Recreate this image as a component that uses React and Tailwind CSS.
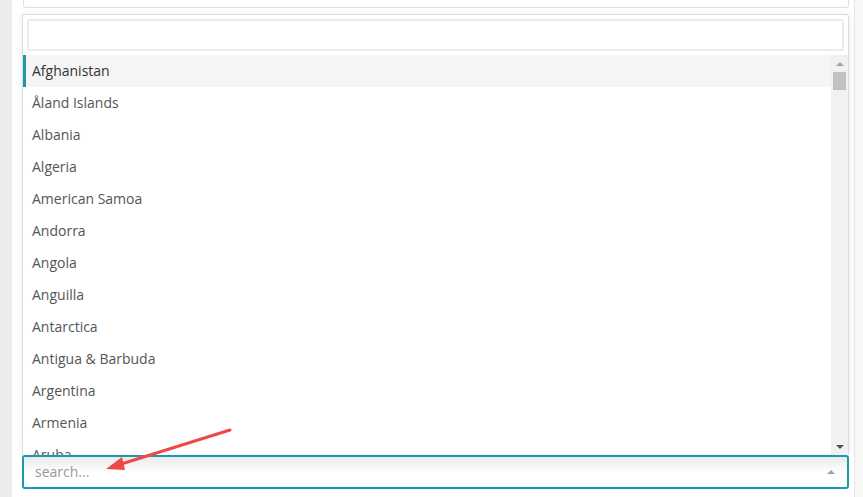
import React from 'react';

const countries = [
  'Afghanistan',
  'Åland Islands',
  'Albania',
  'Algeria',
  'American Samoa',
  'Andorra',
  'Angola',
  'Anguilla',
  'Antarctica',
  'Antigua & Barbuda',
  'Argentina',
  'Armenia',
  'Aruba',
];

const App = () => {
  return (
    <div className="relative flex h-[497px] w-[863px] overflow-hidden bg-white font-['Open_Sans',sans-serif] text-[14px]">
      {/* left page gutter */}
      <div className="w-[12px] shrink-0 bg-[#ececec]" />

      <div className="flex w-[843px] shrink-0 flex-col border-r border-[#e6e6e6] pl-[10px] pr-[5px]">
        {/* previous field, cut off at the top */}
        <div className="ml-px h-[8px] w-[826px] rounded-b-[3px] border border-t-0 border-[#e0e0e0]" />

        {/* dropdown */}
        <div className="mt-[6px] flex h-[441px] w-[827px] flex-col rounded-t-[3px] border border-b-0 border-[#dcdcdc] bg-white shadow-[0_0_8px_rgba(0,0,0,0.08)]">
          <div className="px-[4px] pt-[4px] pb-[4px]">
            <div className="h-[32px] rounded-[3px] border-2 border-[#ececec] bg-white" />
          </div>

          <div className="flex h-[400px] overflow-hidden">
            <ul className="flex-1 overflow-hidden">
              {countries.map((name, i) => (
                <li
                  key={name}
                  className={
                    i === 0
                      ? 'flex h-[32px] items-center border-l-[3px] border-[#1b9aaa] bg-[#f5f5f5] pb-[2px] pl-[6px] text-[#333]'
                      : 'flex h-[32px] items-center pb-[2px] pl-[9px] text-[#555]'
                  }
                >
                  {name}
                </li>
              ))}
            </ul>

            {/* scrollbar */}
            <div className="flex w-[17px] flex-col items-center bg-[#f1f1f1]">
              <div className="flex h-[17px] items-center justify-center">
                <div className="h-0 w-0 border-x-[4px] border-b-[4px] border-x-transparent border-b-[#a3a3a3]" />
              </div>
              <div className="h-[18px] w-[13px] bg-[#c1c1c1]" />
              <div className="flex-1" />
              <div className="flex h-[17px] items-center justify-center">
                <div className="h-0 w-0 border-x-[4px] border-t-[4px] border-x-transparent border-t-[#505050]" />
              </div>
            </div>
          </div>
        </div>

        {/* focused select */}
        <div className="flex h-[34px] w-[827px] items-center justify-between rounded-[3px] border-2 border-[#1b9aaa] bg-gradient-to-b from-[#e9e9e9] via-white to-white pl-[11px] pr-[12px]">
          <span className="pb-[2px] text-[#999]">search...</span>
          <div className="h-0 w-0 border-x-[4px] border-b-[4px] border-x-transparent border-b-[#a0a0a0]" />
        </div>
      </div>

      <div className="flex-1 bg-[#f7f7f7]" />

      {/* annotation arrow */}
      <svg className="pointer-events-none absolute left-0 top-0" width="863" height="497">
        <line x1="230" y1="430" x2="118" y2="465" stroke="#f04848" strokeWidth="3" strokeLinecap="round" />
        <polygon points="106,469 122,457 125,470" fill="#f04848" />
      </svg>
    </div>
  );
};

export default App;
